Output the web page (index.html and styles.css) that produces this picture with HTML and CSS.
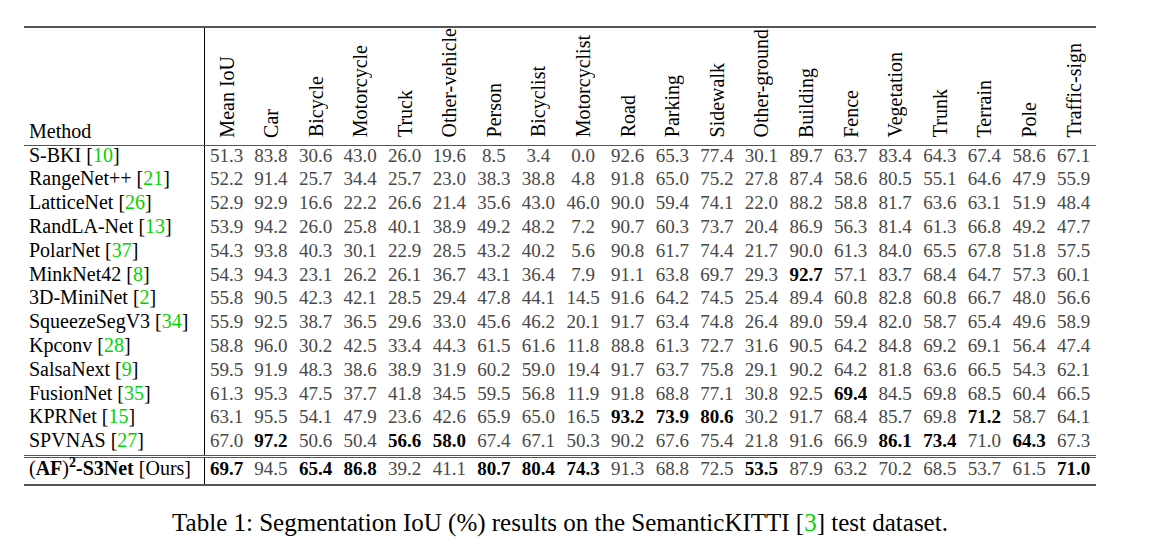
FILE: index.html
```html
<!DOCTYPE html>
<html>
<head>
<meta charset="utf-8">
<link rel="stylesheet" href="styles.css">
</head>
<body>
<div class="page">
<table class="res">
<colgroup>
<col class="c-method">
<col span="20" class="c-num">
</colgroup>
<thead>
<tr>
<th class="method">Method</th>
<th><span class="rot">Mean IoU</span></th>
<th><span class="rot">Car</span></th>
<th><span class="rot">Bicycle</span></th>
<th><span class="rot">Motorcycle</span></th>
<th><span class="rot">Truck</span></th>
<th><span class="rot">Other-vehicle</span></th>
<th><span class="rot">Person</span></th>
<th><span class="rot">Bicyclist</span></th>
<th><span class="rot">Motorcyclist</span></th>
<th><span class="rot">Road</span></th>
<th><span class="rot">Parking</span></th>
<th><span class="rot">Sidewalk</span></th>
<th><span class="rot">Other-ground</span></th>
<th><span class="rot">Building</span></th>
<th><span class="rot">Fence</span></th>
<th><span class="rot">Vegetation</span></th>
<th><span class="rot">Trunk</span></th>
<th><span class="rot">Terrain</span></th>
<th><span class="rot">Pole</span></th>
<th><span class="rot">Traffic-sign</span></th>
</tr>
</thead>
<tbody>
<tr><td class="method">S-BKI [<span class="cite">10</span>]</td><td>51.3</td><td>83.8</td><td>30.6</td><td>43.0</td><td>26.0</td><td>19.6</td><td>8.5</td><td>3.4</td><td>0.0</td><td>92.6</td><td>65.3</td><td>77.4</td><td>30.1</td><td>89.7</td><td>63.7</td><td>83.4</td><td>64.3</td><td>67.4</td><td>58.6</td><td>67.1</td></tr>
<tr><td class="method">RangeNet++ [<span class="cite">21</span>]</td><td>52.2</td><td>91.4</td><td>25.7</td><td>34.4</td><td>25.7</td><td>23.0</td><td>38.3</td><td>38.8</td><td>4.8</td><td>91.8</td><td>65.0</td><td>75.2</td><td>27.8</td><td>87.4</td><td>58.6</td><td>80.5</td><td>55.1</td><td>64.6</td><td>47.9</td><td>55.9</td></tr>
<tr><td class="method">LatticeNet [<span class="cite">26</span>]</td><td>52.9</td><td>92.9</td><td>16.6</td><td>22.2</td><td>26.6</td><td>21.4</td><td>35.6</td><td>43.0</td><td>46.0</td><td>90.0</td><td>59.4</td><td>74.1</td><td>22.0</td><td>88.2</td><td>58.8</td><td>81.7</td><td>63.6</td><td>63.1</td><td>51.9</td><td>48.4</td></tr>
<tr><td class="method">RandLA-Net [<span class="cite">13</span>]</td><td>53.9</td><td>94.2</td><td>26.0</td><td>25.8</td><td>40.1</td><td>38.9</td><td>49.2</td><td>48.2</td><td>7.2</td><td>90.7</td><td>60.3</td><td>73.7</td><td>20.4</td><td>86.9</td><td>56.3</td><td>81.4</td><td>61.3</td><td>66.8</td><td>49.2</td><td>47.7</td></tr>
<tr><td class="method">PolarNet [<span class="cite">37</span>]</td><td>54.3</td><td>93.8</td><td>40.3</td><td>30.1</td><td>22.9</td><td>28.5</td><td>43.2</td><td>40.2</td><td>5.6</td><td>90.8</td><td>61.7</td><td>74.4</td><td>21.7</td><td>90.0</td><td>61.3</td><td>84.0</td><td>65.5</td><td>67.8</td><td>51.8</td><td>57.5</td></tr>
<tr><td class="method">MinkNet42 [<span class="cite">8</span>]</td><td>54.3</td><td>94.3</td><td>23.1</td><td>26.2</td><td>26.1</td><td>36.7</td><td>43.1</td><td>36.4</td><td>7.9</td><td>91.1</td><td>63.8</td><td>69.7</td><td>29.3</td><td class="b">92.7</td><td>57.1</td><td>83.7</td><td>68.4</td><td>64.7</td><td>57.3</td><td>60.1</td></tr>
<tr><td class="method">3D-MiniNet [<span class="cite">2</span>]</td><td>55.8</td><td>90.5</td><td>42.3</td><td>42.1</td><td>28.5</td><td>29.4</td><td>47.8</td><td>44.1</td><td>14.5</td><td>91.6</td><td>64.2</td><td>74.5</td><td>25.4</td><td>89.4</td><td>60.8</td><td>82.8</td><td>60.8</td><td>66.7</td><td>48.0</td><td>56.6</td></tr>
<tr><td class="method">SqueezeSegV3 [<span class="cite">34</span>]</td><td>55.9</td><td>92.5</td><td>38.7</td><td>36.5</td><td>29.6</td><td>33.0</td><td>45.6</td><td>46.2</td><td>20.1</td><td>91.7</td><td>63.4</td><td>74.8</td><td>26.4</td><td>89.0</td><td>59.4</td><td>82.0</td><td>58.7</td><td>65.4</td><td>49.6</td><td>58.9</td></tr>
<tr><td class="method">Kpconv [<span class="cite">28</span>]</td><td>58.8</td><td>96.0</td><td>30.2</td><td>42.5</td><td>33.4</td><td>44.3</td><td>61.5</td><td>61.6</td><td>11.8</td><td>88.8</td><td>61.3</td><td>72.7</td><td>31.6</td><td>90.5</td><td>64.2</td><td>84.8</td><td>69.2</td><td>69.1</td><td>56.4</td><td>47.4</td></tr>
<tr><td class="method">SalsaNext [<span class="cite">9</span>]</td><td>59.5</td><td>91.9</td><td>48.3</td><td>38.6</td><td>38.9</td><td>31.9</td><td>60.2</td><td>59.0</td><td>19.4</td><td>91.7</td><td>63.7</td><td>75.8</td><td>29.1</td><td>90.2</td><td>64.2</td><td>81.8</td><td>63.6</td><td>66.5</td><td>54.3</td><td>62.1</td></tr>
<tr><td class="method">FusionNet [<span class="cite">35</span>]</td><td>61.3</td><td>95.3</td><td>47.5</td><td>37.7</td><td>41.8</td><td>34.5</td><td>59.5</td><td>56.8</td><td>11.9</td><td>91.8</td><td>68.8</td><td>77.1</td><td>30.8</td><td>92.5</td><td class="b">69.4</td><td>84.5</td><td>69.8</td><td>68.5</td><td>60.4</td><td>66.5</td></tr>
<tr><td class="method">KPRNet [<span class="cite">15</span>]</td><td>63.1</td><td>95.5</td><td>54.1</td><td>47.9</td><td>23.6</td><td>42.6</td><td>65.9</td><td>65.0</td><td>16.5</td><td class="b">93.2</td><td class="b">73.9</td><td class="b">80.6</td><td>30.2</td><td>91.7</td><td>68.4</td><td>85.7</td><td>69.8</td><td class="b">71.2</td><td>58.7</td><td>64.1</td></tr>
<tr><td class="method">SPVNAS [<span class="cite">27</span>]</td><td>67.0</td><td class="b">97.2</td><td>50.6</td><td>50.4</td><td class="b">56.6</td><td class="b">58.0</td><td>67.4</td><td>67.1</td><td>50.3</td><td>90.2</td><td>67.6</td><td>75.4</td><td>21.8</td><td>91.6</td><td>66.9</td><td class="b">86.1</td><td class="b">73.4</td><td>71.0</td><td class="b">64.3</td><td>67.3</td></tr>
<tr class="ours"><td class="method"><span class="paren">(</span><b>AF</b><span class="paren">)</span><sup>2</sup><b>-S3Net</b> [Ours]</td><td class="b">69.7</td><td>94.5</td><td class="b">65.4</td><td class="b">86.8</td><td>39.2</td><td>41.1</td><td class="b">80.7</td><td class="b">80.4</td><td class="b">74.3</td><td>91.3</td><td>68.8</td><td>72.5</td><td class="b">53.5</td><td>87.9</td><td>63.2</td><td>70.2</td><td>68.5</td><td>53.7</td><td>61.5</td><td class="b">71.0</td></tr>
</tbody>
</table>
<p class="caption">Table 1: Segmentation IoU (%) results on the SemanticKITTI [<span class="cite">3</span>] test dataset.</p>
</div>
</body>
</html>
```

FILE: styles.css
```css
html, body {
  margin: 0;
  padding: 0;
  background: #ffffff;
}

.page {
  padding: 26px 0 0 24px;
  width: 1072px;
  font-family: "Liberation Serif", "Times New Roman", serif;
  color: #000;
}

.res {
  border-collapse: collapse;
  table-layout: fixed;
  width: 1072px;
  border-top: 2px solid #555;
  border-bottom: 2px solid #555;
}

.c-method { width: 180px; }
.c-num { width: 44.6px; }

.res th {
  height: 100px;
  padding: 0 0 4px 0;
  vertical-align: bottom;
  font-weight: normal;
  font-size: 20px;
  line-height: 20px;
  border-bottom: 1px solid #555;
  text-align: center;
}

.res th.method {
  text-align: left;
  padding-left: 5px;
  border-right: 1px solid #000;
}

.rot {
  display: inline-block;
  writing-mode: vertical-rl;
  transform: rotate(180deg);
  white-space: nowrap;
  line-height: 20px;
}

.res td {
  height: 23.8px;
  padding: 0;
  vertical-align: top;
  text-align: center;
  font-size: 19px;
  line-height: 19px;
  color: #484848;
  white-space: nowrap;
}

.res td.method {
  text-align: left;
  padding-left: 5px;
  font-size: 20px;
  color: #000;
  border-right: 1px solid #000;
}

.res td.b {
  font-weight: bold;
  color: #000;
}

.cite {
  color: #00d400;
}

.ours td {
  border-top: 3px double #555;
  height: 24.6px;
  padding-top: 1px;
}

.ours b {
  font-weight: bold;
}

.ours sup {
  font-weight: bold;
  font-size: 14px;
  line-height: 0;
  vertical-align: 8px;
}

.paren {
  font-weight: normal;
}

.caption {
  margin: 23px 0 0 0;
  text-align: center;
  font-size: 25px;
  line-height: 28px;
}
```
